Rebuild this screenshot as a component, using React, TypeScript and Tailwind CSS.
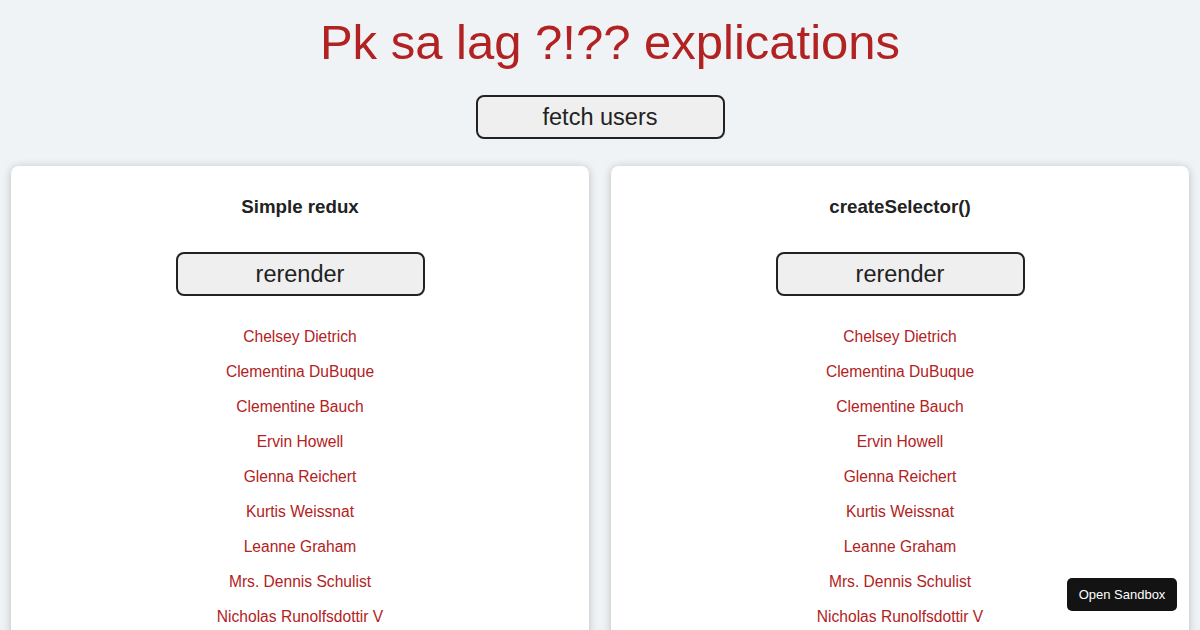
import { useState } from "react";

// Liste over brukere, sortert alfabetisk (som etter fetch + sort)
const brukere = [
    "Chelsey Dietrich",
    "Clementina DuBuque",
    "Clementine Bauch",
    "Ervin Howell",
    "Glenna Reichert",
    "Kurtis Weissnat",
    "Leanne Graham",
    "Mrs. Dennis Schulist",
    "Nicholas Runolfsdottir V",
    "Patricia Lebsack",
];

const knappStil = "w-[249px] h-[44px] border-2 border-[#222] rounded-[8px] bg-[#efefef] text-[23.5px] leading-[30px] text-[#222]";

function Kort({ tittel }: { tittel: string }) {
    const [, setTeller] = useState(0);

    return (
        <div className="bg-white rounded-[8px] shadow-[0_1px_8px_rgba(0,0,0,0.22)] flex flex-col items-center pt-[30px] pb-6">
            <h3 className="text-[18.72px] leading-[21px] font-bold text-[#222]">{tittel}</h3>
            <button className={knappStil + " mt-[35px]"} onClick={() => setTeller((t) => t + 1)}>
                rerender
            </button>
            <ul className="mt-[23px] flex flex-col items-center">
                {brukere.map((navn) => (
                    <li key={navn} className="h-[35px] flex items-center text-[15.6px] text-[#b22222]">
                        {navn}
                    </li>
                ))}
            </ul>
        </div>
    );
}

export default function App() {
    return (
        <div className="min-h-screen bg-[#f0f3f5] px-[11px] flex flex-col items-center font-['Liberation_Sans',Arial,sans-serif]">
            <h1 className="mt-[14px] ml-[20px] text-[49px] leading-[57px] text-[#b22222]">Pk sa lag ?!?? explications</h1>
            <button className={knappStil + " mt-[24px]"}>fetch users</button>
            <div className="mt-[27px] w-full grid grid-cols-2 gap-[22px]">
                <Kort tittel="Simple redux" />
                <Kort tittel="createSelector()" />
            </div>
            <button className="fixed right-[23px] bottom-[19px] w-[110px] h-[33px] rounded-[5px] bg-[#131313] text-white text-[13px]">
                Open Sandbox
            </button>
        </div>
    );
}
